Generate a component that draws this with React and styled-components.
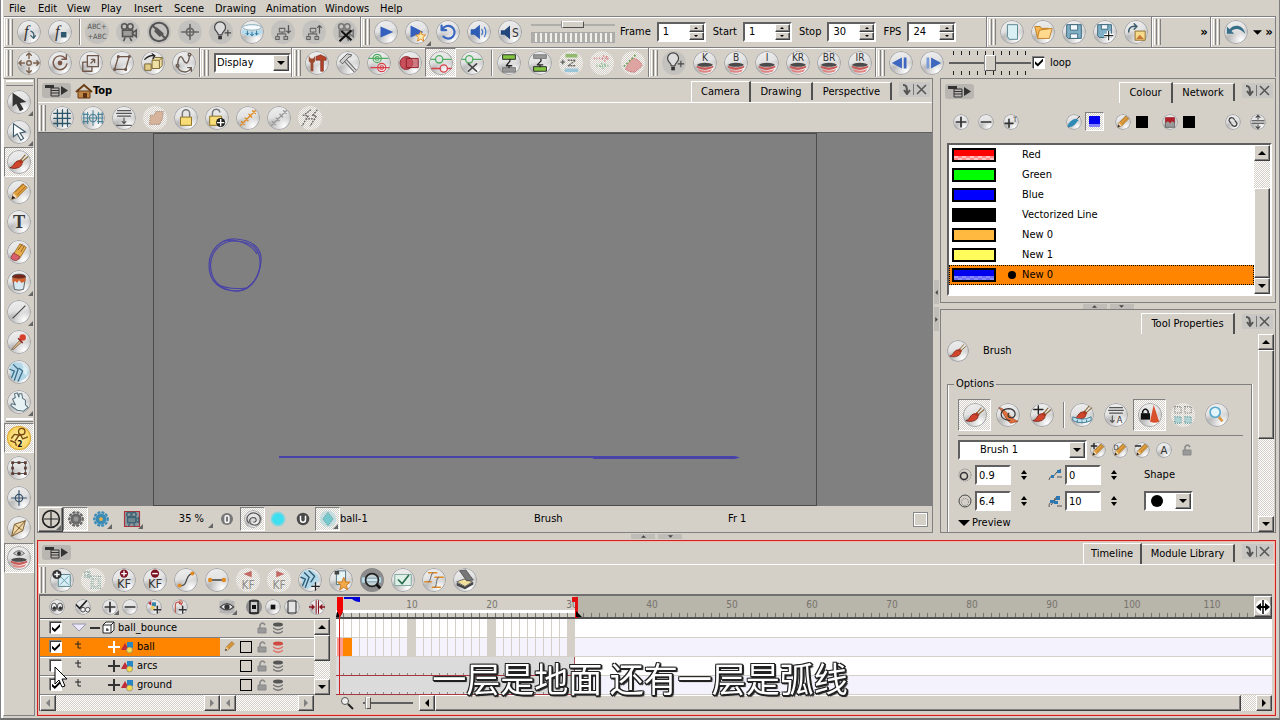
import React from 'react'
import styled, { createGlobalStyle, css } from 'styled-components'

const face = '#d4d0c8'
const shade = '#808080'
const checker = 'repeating-conic-gradient(#ffffff 0 25%, #d4d0c8 0 50%) 0 0 / 2px 2px'

const GlobalStyle = createGlobalStyle`
  * { box-sizing: border-box; }
  body {
    margin: 0;
    overflow: hidden;
    background: ${face};
    color: #000;
    font: 11px/14px "DejaVu Sans Condensed", Tahoma, sans-serif;
  }
  button, input, select { font: inherit; color: inherit; margin: 0; }
  button { padding: 0; border: 0; background: none; }
  ul { margin: 0; padding: 0; list-style: none; }
  svg { display: block; flex: none; }
`

const raised = css`
  background-color: ${face};
  border: 1px solid;
  border-color: #fff #404040 #404040 #fff;
  box-shadow: inset -1px -1px 0 ${shade};
`

const sunken = css`
  background-color: #fff;
  border: 2px solid;
  border-color: #606060 #fff #fff #606060;
`

/* ---------- drawings, all on a 24 unit square ---------- */

const G = ({ c = '#444', w = 1.4, children }) => (
  <g fill="none" stroke={c} strokeWidth={w} strokeLinecap="round" strokeLinejoin="round">{children}</g>
)

const T = ({ x = 12, y = 16, s = 10, c = '#333', w = 400, f = 'DejaVu Sans Condensed', children }) => (
  <text x={x} y={y} fontSize={s} fill={c} fontWeight={w} fontFamily={f} textAnchor="middle">{children}</text>
)

const brushShape = (
  <>
    <path d="M13 11l6-7M15 12l7-6" stroke="#8a6a3a" strokeWidth="1.200" />
    <path d="M2 18c4 0 4-5 8-7 3-1 6 1 5 4-2 4-9 5-13 3z" fill="#d0452c" stroke="#6e1c10" strokeWidth=".8" />
    <path d="M11 11l3-2 3 3-2 2z" fill="#a83a22" />
  </>
)

const cameraShape = (c) => (
  <g fill="none" stroke={c} strokeWidth="1.800">
    <circle cx="8" cy="6" r="3" /><circle cx="14.500" cy="6" r="3" />
    <rect x="6" y="10" width="11" height="7" fill={c} fillOpacity=".35" />
    <path d="M17 13l4-3v7l-4-3M9 18l-2 4M14 18l2 4" />
  </g>
)

const nodesShape = (
  <G c="#666" w={1.2}><path d="M4 17h4v3H4zM13 17h4v3h-4zM8 8h6v4H8zM11 12v2M6 17v-3h9v3" /></G>
)

const onionBase = (
  <>
    <ellipse cx="12" cy="14" rx="8.500" ry="2.200" fill="#4a4a4a" />
    <path d="M3 15q9 4 18 0v2q-9 5-18 0z" fill="#c95a58" />
    <path d="M4 18.500q8 4 16 0l-2 3q-6 2.500-12 0z" fill="#e08682" />
  </>
)

const keyShape = (t) => <>{onionBase}<T y={10} s={11}>{t}</T></>

const bulbShape = (
  <>
    <path d="M9 15c0-3-4-4-4-8a6 6 0 0 1 12 0c0 4-4 5-4 8z" fill="#ddd" stroke="#444" strokeWidth="1.300" />
    <path d="M9 16h4v4H9z" fill="#333" />
    <path d="M16 13h7M19.500 9.500v7" stroke="#444" strokeWidth="1.200" />
  </>
)

const pencilShape = (
  <>
    <path d="M4 20l2-7L16 3l5 4L10 18z" fill="#e5a13c" stroke="#8a5a20" strokeWidth=".8" />
    <path d="M8 12l9-9M10 15l9-9" stroke="#8a5a20" strokeWidth=".8" />
    <path d="M4 20l2-7 4 5z" fill="#f4dcb8" /><path d="M4 20l1-4 3 2.500z" fill="#111" />
  </>
)

const figures = {
  fnArrow: <><T x={9} y={17} s={18} f="Liberation Serif"><tspan fontStyle="italic">f</tspan></T><G c="#3d6070"><path d="M14 11c3 1 4 3 3 7M14 16l3 3 2-3" /></G></>,
  fnBox: <><T x={9} y={17} s={18} f="Liberation Serif"><tspan fontStyle="italic">f</tspan></T><path d="M13 12h6v6h-6z" fill="#2f5870" /></>,
  abc: <><T y={9} s={8} c="#555">ABC+</T><T y={20} s={8} c="#555">+ABC</T></>,
  camera: cameraShape('#555'),
  noLight: <G c="#555" w={2.2}><circle cx="12" cy="12" r="10" /><path d="M5 5l14 14M9 8l7 6M8 11l5 5" /></G>,
  target: <G c="#666" w={1.8}><circle cx="12" cy="12" r="4" /><path d="M12 4v16M3 12h18" /></G>,
  bulb: bulbShape,
  deform: <><ellipse cx="12" cy="7" rx="10" ry="3" fill="#f6fbfd" stroke="#7fa6b8" /><path d="M1 9q11 5 22 0v5q-11 6-22 0z" fill="#b4dcee" /><G c="#246a90" w={1}><path d="M7 11v4M5.500 13.500L7 15l1.500-1.500M12 12v4M10.500 14.500L12 16l1.500-1.500M17 11v4M15.500 13.500l1.500 1.500 1.500-1.500" /></G></>,
  nodesDown: <>{nodesShape}<G c="#555"><path d="M18 5v8M16 11l2 2 2-2" /></G></>,
  nodesUp: <>{nodesShape}<G c="#555"><path d="M18 13V5M16 7l2-2 2 2" /></G></>,
  noCamera: <>{cameraShape('#777')}<path d="M6 22L19 10M8 11l11 10" fill="none" stroke="#111" strokeWidth="2.200" /></>,
  play: <path d="M6 6l14 6-14 6z" fill="#3560bd" />,
  playStar: <><path d="M5 5l14 7-14 6z" fill="#3560bd" /><path d="M16 11l1.500 4 4 .2-3 2.800 1 4-3.500-2.200-3.500 2.200 1-4-3-2.800 4-.2z" fill="#ffe9a8" stroke="#d9801c" /></>,
  loop: <G c="#3a68c0" w={2.4}><path d="M6 9a7 7 0 1 1 1 8M5 5v5h5" /></G>,
  sound: <><path d="M3 9h4l6-5v16l-6-5H3z" fill="#2c5cb4" /><G c="#4a7ac8"><path d="M15 9q2 3 0 6M18 7q3 5 0 10" /></G></>,
  soundS: <><path d="M2 10h4l6-5v15l-6-5H2z" fill="#23467c" /><T x={18} y={17} s={13}>S</T></>,
  page: <path d="M7 4h11v16H9l-2-3z" fill="#d9f0f4" stroke="#52808c" />,
  folder: <><path d="M3 6h6l1 2h8v10H6z" fill="#f5b854" stroke="#c07c20" /><path d="M8 10l14-2-3 11H6z" fill="#ffd98e" stroke="#c07c20" /></>,
  disk: <><path d="M4 4h16v15H6l-2-2z" fill="#7fb0c6" stroke="#38647a" /><path d="M8 4h8v6H8zM8 14h8v5H8z" fill="#f2f8fb" stroke="#38647a" /></>,
  diskPlus: <><path d="M4 4h15v14H6l-2-2z" fill="#7fb0c6" stroke="#38647a" /><path d="M8 4h7v5H8z" fill="#f2f8fb" stroke="#38647a" /><path d="M16 11v10M11 16h10" stroke="#fff" strokeWidth="4" /><path d="M16 11v10M11 16h10" stroke="#222" strokeWidth="1.200" /></>,
  importImg: <><path d="M11 11h11v10H11z" fill="#f6dc8a" stroke="#8c6a2a" /><path d="M12 20l4-5 5 5z" fill="#c8763a" /><G c="#3c5c6c" w={1.6}><path d="M4 12c0-6 5-7 9-6M10 3l3 3-3 3" /></G></>,
  undo: <path d="M2 6v8h8l-3-3c4-4 10-3 15 3-2-10-12-11-17-5z" fill="#376f88" />,
  move: <G c="#7a604c" w={1.5}><circle cx="12" cy="12" r="2.500" /><path d="M12 7V1M9.500 3.500L12 1l2.500 2.500M12 17v6M9.500 20.500L12 23l2.500-2.500M7 12H1M3.500 9.500L1 12l2.500 2.500M17 12h6M20.500 9.500L23 12l-2.500 2.500" /></G>,
  rotate: <G c="#7a5a4c" w={1.6}><path d="M17.500 6.500a7.500 7.500 0 1 0 2 6.500M19 3v5h-5" /><circle cx="12" cy="12" r="1.800" fill="#7a4a34" /></G>,
  scale: <G c="#6e5648" w={1.4}><path d="M8 4h12v12H8zM8 11H3v10h10v-5M12 12l4-4M12.500 8H16v3.500" /></G>,
  skew: <G c="#6e5648" w={1.4}><path d="M8 5h12l-4 14H4z" /><circle cx="8" cy="5" r="1" /><circle cx="20" cy="5" r="1" /><circle cx="16" cy="19" r="1" /><circle cx="4" cy="19" r="1" /></G>,
  cube: <><path d="M11 9l3-3h8v9l-3 3h-8z" fill="#efe0a4" stroke="#77622c" /><path d="M11 9h8v9M19 9l3-3" stroke="#77622c" fill="none" /><path d="M3 13h7v7H3z" fill="#e2cc88" stroke="#77622c" /><G c="#222"><path d="M3 8q5-5 11-4M11 2l3 2-2 3" /></G></>,
  spline: <G c="#6a5c54" w={1.5}><path d="M5 14c1-10 4-11 6-6s6 7 7-4M5 16c2 7 12 8 15 1M16 17h4v4" /><circle cx="5" cy="15" r="1.500" /><circle cx="18" cy="3" r="1.500" /></G>,
  tools: <><path d="M3 4v6l2 2v9h3v-9l2-2V4L8 7H5z" fill="#9c4a30" /><path d="M11 5l5-2 6 3v3h-3v12h-3V9h-5z" fill="#b4432a" stroke="#6c2012" strokeWidth=".6" /></>,
  hammer: <><path d="M9 9l11 12" stroke="#666" strokeWidth="4" /><path d="M9 9l11 12" stroke="#ddd" strokeWidth="2" /><path d="M3 10l8-8 5 1-1 2-2 .5L6 13z" fill="#ccc" stroke="#555" /></>,
  wires: <><G c="#4fae62" w={1.3}><path d="M1 7h21" /><circle cx="10" cy="7" r="4.500" /><circle cx="10" cy="7" r="2" /></G><G c="#d8404a" w={1.3}><path d="M3 17h20" /><circle cx="15" cy="17" r="4.500" /><circle cx="15" cy="17" r="2" /></G></>,
  mask: <g stroke="#8a1c24" fill="#c8505c"><circle cx="8" cy="12" r="7" /><path d="M8 7h13v10H8z" fillOpacity=".7" /></g>,
  wirePair: <><G c="#4fae62" w={1.4}><path d="M1 8h5M14 8h9" /><circle cx="10" cy="8" r="4" /></G><G c="#d8404a" w={1.4}><path d="M2 18h9M19 18h4" /><circle cx="15" cy="18" r="4" /></G></>,
  wireCut: <><G c="#4fae62" w={1.4}><path d="M1 8h4M13 8h9" /><circle cx="9" cy="8" r="4" /></G><G c="#444" w={1.8}><path d="M8 13l9 8M17 13l-9 8" /></G></>,
  hingeA: <><path d="M5 3h14v5H5z" fill="#83c441" stroke="#222" /><path d="M5 17h14v5H5z" fill="#999" stroke="#777" /><G c="#222"><path d="M13 8v2l-4 5h6M12 15v2" /></G></>,
  hingeB: <><path d="M5 3h14v4H5z" fill="#999" stroke="#777" /><path d="M5 16h14v5H5z" fill="#83c441" stroke="#222" /><G c="#222"><path d="M13 8v2l-4 4h6M12 14v2" /></G></>,
  hingeC: <><path d="M6 2h13v4H6z" fill="#83b45a" /><path d="M5 18h15v4H5z" fill="#8cc4dc" /><G c="#444"><path d="M9 9h8l-8 6h9" strokeDasharray="1 2" /><path d="M1 11h4M3 9v4" /></G></>,
  wireDim: <g strokeDasharray="1 2" fill="none" strokeWidth="2"><path d="M3 7h17" stroke="#d8606a" /><path d="M6 15h15" stroke="#70b880" /><circle cx="15" cy="7" r="2.500" stroke="#d8606a" /><circle cx="13" cy="15" r="2.500" stroke="#70b880" /></g>,
  envelope: <><path d="M4 19q4-12 10-12 7 3 8 8l-8 7q-6 0-10-3z" fill="#e09a98" stroke="#c85058" strokeDasharray="2 1" /><path d="M2 16L15 3" stroke="#5a9a40" strokeWidth="2" strokeDasharray="2 2" /></>,
  keyK: keyShape('K'), keyB: keyShape('B'), keyI: keyShape('I'),
  keyKR: keyShape('KR'), keyBR: keyShape('BR'), keyIR: keyShape('IR'),
  prev: <><path d="M13 6v12L2 12z" fill="#3e68c0" /><path d="M15 6h3v12h-3z" fill="#3e68c0" /></>,
  next: <><path d="M11 6v12l11-6z" fill="#3e68c0" /><path d="M6 6h3v12H6z" fill="#7a9ad8" /></>,
  grid: <G c="#2c5468" w={1.4}><path d="M7 3v18M12.500 3v18M18 3v18M3 7h18M3 12.500h18M3 18h18" /></G>,
  fieldGrid: <G c="#4c8498" w={1.2}><path d="M2 6v12M22 6v12M6 6v12M18 6v12M1 12h22M12 4v16M1 8h6M17 8h6M1 16h6M17 16h6" /><circle cx="12" cy="12" r="4" /></G>,
  flatten: <G c="#555" w={1.3}><path d="M5 4h14M4 7h16M5 10h14M4 20h16M12 12v6M10 16l2 2 2-2" /></G>,
  strip: <path d="M7 9h4l2-4h8l-1 8-3 6H6z" fill="#d8ac90" stroke="#8a6a58" strokeDasharray="1 1" />,
  lock: <><path d="M6 11h12v9H6z" fill="#f8dc78" stroke="#8a6c1c" /><path d="M8 11V7a4 4 0 0 1 8 0v4" fill="none" stroke="#777" strokeWidth="1.600" /></>,
  unlock: <><path d="M4 10h13v10H4z" fill="#f8dc78" stroke="#8a6c1c" /><path d="M7 10V7c0-6 8-6 8-1" fill="none" stroke="#777" strokeWidth="1.600" /><circle cx="16" cy="17" r="5" fill="#222" /><path d="M16 13v8M12 17h8" stroke="#fff" strokeWidth="1.500" /></>,
  stitch: <G c="#e08a24" w={1.5}><path d="M4 20L20 4M5 16l3 3M9 12l3 3M13 8l3 3M17 4l3 3" /></G>,
  stitchDim: <G c="#999" w={1.5}><path d="M4 20L20 4M5 16l3 3M9 12l3 3M13 8l3 3M17 4l3 3" /></G>,
  zig: <g fill="none" stroke="#444" strokeWidth="1.400" strokeDasharray="2 1"><path d="M13 3l-8 6 5 1-7 11M20 3l-5 6 4 1-7 11M7 13h10" /></g>,
  arrow: <path d="M5 2v15l4-3 4 8 4-2-4-7 7-1z" fill="#333" />,
  contour: <path d="M6 3v14l4-3 4 7 3-2-4-6 6-1z" fill="#fff" stroke="#3c5868" strokeWidth="1.200" />,
  brush: brushShape,
  pencil: pencilShape,
  text: <T y={19} s={20} c="#3a3a3a" w={700} f="Liberation Serif">T</T>,
  eraser: <><path d="M5 16L13 3l7 4-8 13z" fill="#e8b04a" stroke="#8c5a24" strokeWidth=".8" /><path d="M11 10l5-7M14 12l4-7" stroke="#8c5a24" /><path d="M3 18l3-5 7 4-3 4q-5 1-7-3z" fill="#d8606c" stroke="#8c3038" strokeWidth=".8" /></>,
  bucket: <><path d="M5 6h14l-2 14q-5 2-10 0z" fill="#d8e8f0" stroke="#555" /><ellipse cx="12" cy="6" rx="7" ry="2.500" fill="#7a2418" stroke="#444" /><path d="M5 7v6l3-2 2 2 2-3 3 3 4-2V7q-7 3-14 0z" fill="#d4602c" /></>,
  line: <path d="M5 19L19 5" stroke="#444" strokeWidth="1.200" />,
  dropper: <><path d="M4 20L13 10l2 2-9 8z" fill="#e0bc88" stroke="#6c4c38" strokeWidth=".8" /><circle cx="16" cy="7" r="3.500" fill="#d8402c" /><path d="M11 8l5 5" stroke="#802018" strokeWidth="1.500" /></>,
  morph: <><path d="M2 5l5-4 8 1 6 5 2 6-4 6-7 4-8-4z" fill="#b4d8e8" /><path d="M14 1l8 8-2 7-5-5 2-4z" fill="#dceef6" /><G c="#3c6c88" w={1.4}><path d="M2 9l5 2-3 7M6 4l5 5-4 12M12 8l4 3-5 11" /></G></>,
  hand: <path d="M5 9l3-2-1-4 3-1 2 5V3h3l1 5 3 2v5l3 3-5 4-7-1-7-5 1-2 4 1z" fill="#e6f2f4" stroke="#56707c" strokeWidth="1.100" />,
  runner: <><G c="#7a4a10" w={1.5}><circle cx="15" cy="5" r="3.500" /><path d="M13 9l-6-1-3 4M12 9l-4 6M3 15l5 2 1 3M14 9l2 4 5-2" /></G><T x={13} y={22} s={9} w={700} c="#111">2</T></>,
  bounds: <><G c="#555" w={1.1}><path d="M5 6h14v12H5z" /></G><path d="M3.500 4.500h3v3h-3zM10.500 4.500h3v3h-3zM17.500 4.500h3v3h-3zM3.500 10.500h3v3h-3zM17.500 10.500h3v3h-3zM3.500 16.500h3v3h-3zM10.500 16.500h3v3h-3zM17.500 16.500h3v3h-3z" fill="#5c3c34" /></>,
  pivot: <G c="#35506c" w={1.3}><circle cx="12" cy="12" r="4" /><path d="M12 4v16M4 12h16" /></G>,
  kite: <path d="M4 21l3-13 12-4-3 11zM4 21L19 4M7 8l9 7" fill="#efd7a8" stroke="#77582c" />,
  eyeOnion: <>{onionBase}<path d="M6 7q6-6 12 0-6 5-12 0z" fill="#ccc" stroke="#666" /><circle cx="12" cy="7" r="2" fill="#333" /></>,
  addDrawing: <><path d="M8 6h13v13H8z" fill="#d8eef4" stroke="#52808c" /><path d="M10 8l9 9M19 8l-9 9" stroke="#5c98ac" /><circle cx="6.500" cy="6" r="5" fill="#333" /><path d="M6.500 3v6M3.500 6h6" stroke="#fff" strokeWidth="1.600" /></>,
  dupDrawing: <g fill="none" stroke="#79a8a0" strokeWidth="1.600" strokeDasharray="1 1.500"><path d="M10 8h10v13H10zM3 7h7M7 3v8M3 3h6v6H3z" /><path d="M12 11h6v8h-6z" /></g>,
  kfAdd: <><T y={21} s={14}>KF</T><circle cx="12" cy="5" r="4.500" fill="#7a1220" /><path d="M12 2v6M9 5h6" stroke="#fff" strokeWidth="1.500" /></>,
  kfDel: <><T y={21} s={14}>KF</T><circle cx="12" cy="5" r="4.500" fill="#7a1220" /><path d="M9 5h6" stroke="#fff" strokeWidth="1.500" /></>,
  motion: <><G c="#444"><path d="M5 18c10 2 5-12 14-13" /></G><circle cx="5" cy="18" r="2.200" fill="#e08a24" /><circle cx="19" cy="5" r="2.200" fill="#e08a24" /></>,
  stop: <><G c="#444"><path d="M5 12h14" /></G><circle cx="4.500" cy="12" r="2.400" fill="#e08a24" /><circle cx="19.500" cy="12" r="2.400" fill="#e08a24" /></>,
  kfPrev: <><g opacity=".6"><T y={22} s={13}>KF</T></g><path d="M16 2v7L7 5.500z" fill="#c0504c" /></>,
  kfNext: <><g opacity=".6"><T y={22} s={13}>KF</T></g><path d="M9 2v7l9-3.500z" fill="#c0504c" /></>,
  morphAdd: <><path d="M2 5l5-4 8 1 6 5 1 6-8 6-6 3-4-4z" fill="#b4d8e8" /><G c="#2c5c78" w={1.5}><path d="M2 9l5 2-3 7M6 4l5 5-4 11M11 2l6 6-4 6" /></G><G c="#222" w={1.4}><path d="M14 19h8M18 15v8" /></G></>,
  starDoc: <><path d="M8 2h9v15H7V5z" fill="#e6f4f6" stroke="#4c6c78" /><path d="M5 2h5v4H5z" fill="#444" /><path d="M15 9l2 5 5 .3-4 3.500 1.300 5-4.300-2.800-4.500 2.800 1.500-5-4-3.500 5-.3z" fill="#f0a848" stroke="#c8761c" /></>,
  search: <><path d="M1 9h21v6H1z" fill="#bfe0ec" stroke="#8ab" strokeWidth=".6" /><circle cx="12" cy="12" r="7" fill="#dcecf2" fillOpacity=".7" stroke="#222" strokeWidth="2" /><path d="M17 17l4 4" stroke="#111" strokeWidth="3" /><path d="M6 10h12M6 14h12" stroke="#789" /></>,
  check: <><path d="M3 6h18v12H3z" fill="#dff0e8" stroke="#7ca49c" /><G c="#2a6c4c" w={1.8}><path d="M7 12l4 4 7-9" /></G></>,
  curves: <><G c="#e08a24" w={1.7}><path d="M6 4h9M2 14h7M13 9h9M10 20h9" /></G><G c="#777" w={1.2}><path d="M11 4c-4 3-1 7-5 10M17 9c-4 3-1 8-4 11" /></G></>,
  scanner: <><path d="M3 15l9 4 9-5v3l-9 5-9-4z" fill="#444" /><path d="M3 14l8-3 9 3-8 5z" fill="#f3df9c" stroke="#666" /><path d="M6 2l7-1 8 11-7 1z" fill="#777" stroke="#444" strokeWidth=".8" /></>,
  plus: <G c="#333" w={2.6}><path d="M12 5v14M5 12h14" /></G>,
  minus: <G c="#333" w={2.6}><path d="M5 12h14" /></G>,
  plusT: <><G c="#333" w={2.4}><path d="M9 8v12M3 14h12" /></G><T x={18} y={12} s={11}>T</T></>,
  quill: <><path d="M3 20L21 3" stroke="#444" strokeWidth="1.500" /><path d="M2 19q3-10 12-12l5 2-6 7q-5 5-11 3z" fill="#2f8ab4" /></>,
  bucketRed: <><path d="M5 6h14v14H5z" fill="#999" stroke="#444" /><path d="M5 5h14v8l-4-2-3 3-3-3-4 2z" fill="#b02028" /></>,
  link: <G c="#444" w={2}><path d="M9 14l-3-4c0-5 5-6 8-2M15 10l3 4c0 5-5 6-8 2" /></G>,
  split: <G c="#444" w={1.6}><path d="M3 10h18M3 14h18M12 8V2M9 5l3-3 3 3M12 16v6M9 19l3 3 3-3" /></G>,
  brushOutline: <><path d="M2 4c7 0 10 10 21 15l-8 2C9 17 8 10 2 4z" fill="#e0703c" stroke="#8c3c1c" strokeWidth=".7" /><G c="#333" w={1.3}><path d="M14 18c-13-1-12-13-1-13 9 1 8 10 3 10-4 0-5-3-3-5" /></G></>,
  brushPlus: <>{brushShape}<G c="#222" w={1.5}><path d="M8 2v9M3 6h10" /></G></>,
  brushRuler: <><g transform="translate(1 -2)">{brushShape}</g><path d="M2 14q10 5 20 0v4q-10 5-20 0z" fill="#c4e4f0" stroke="#3c7890" /><path d="M7 17v3M12 18v3M17 17v3" stroke="#3c7890" /></>,
  flattenA: <><G c="#555" w={1.2}><path d="M5 4h14M4 7h16M5 10h14M8 13v7M6 18l2 2 2-2" /></G><T x={16} y={21} s={10}>A</T></>,
  lockPaint: <><path d="M2 10h10v7H2z" fill="#111" /><path d="M4 10V8q3-5 6 0v2" fill="none" stroke="#111" strokeWidth="1.600" /><path d="M16 1l6 18q-5 3-10 0z" fill="#d8502c" /></>,
  cells: <g fill="none" strokeWidth="1.400" strokeDasharray="1 1.500"><path d="M3 3h7v7H3zM14 3h7v7h-7z" stroke="#666" /><path d="M3 14h7v7H3zM14 14h7v7h-7z" stroke="#4c9098" fill="#a8d4d8" /></g>,
  lens: <><circle cx="10" cy="9" r="5.500" fill="#e4f4fb" stroke="#56a8cc" strokeWidth="1.800" /><path d="M14 14l4 5" stroke="#d99a4a" strokeWidth="3" /></>,
  penAdd: <>{pencilShape}<G c="#222" w={2}><path d="M6 2v8M2 6h8" /></G></>,
  penD: <>{pencilShape}<T x={6} y={12} s={11}>D</T></>,
  penDel: <>{pencilShape}<G c="#222" w={2}><path d="M2 6h8" /></G></>,
  letterA: <T y={18} s={17}>A</T>,
  eyes: <g fill="#eee" stroke="#444" strokeWidth="1.400"><ellipse cx="7.500" cy="12" rx="4" ry="6" /><ellipse cx="16.500" cy="12" rx="4" ry="6" /><circle cx="8" cy="14" r="2.200" fill="#222" /><circle cx="17" cy="14" r="2.200" fill="#222" /></g>,
  eyesCheck: <><g fill="#eee" stroke="#444" strokeWidth="1.400"><circle cx="12" cy="16" r="3.500" /><circle cx="19" cy="16" r="3.500" /></g><G c="#222" w={2.6}><path d="M2 9l5 5L17 3" /></G></>,
  layersAdd: <><path d="M3 6l5-3v7z" fill="#b03040" /><path d="M9 5h6v6H9z" fill="#3484a8" /><circle cx="10" cy="13" r="3" fill="#f0d060" /><G c="#333" w={2.2}><path d="M17 11v10M12 16h10" /></G></>,
  pegAdd: <><G c="#c05040" w={1.6}><path d="M5 20V9c0-6 9-6 9 0" /><circle cx="13" cy="5" r="2.500" /></G><G c="#333" w={2.2}><path d="M16 11v10M11 16h10" /></G></>,
  eye: <><path d="M1 3h22v18H1z" fill="#b4b4b4" /><path d="M2 12q10-10 20 0-10 9-20 0z" fill="#eee" stroke="#444" strokeWidth="1.600" /><circle cx="12" cy="12" r="4" fill="#333" /></>,
  cellDot: <><path d="M6 3h12v18H6z" fill="#ccc" stroke="#111" strokeWidth="2" /><path d="M9 9h6v6H9z" fill="#111" /></>,
  dot: <path d="M8.500 8.500h7v7h-7z" fill="#111" />,
  cell: <path d="M6 3h12v18H6z" fill="#e4e4e4" stroke="#222" strokeWidth="1.500" />,
  fold: <g fill="#8a1420"><path d="M10 2h1.500v20H10zM13.500 2H15v20h-1.500z" /><path d="M0 11h4V7l5 5-5 5v-4H0zM24 11h-4V7l-5 5 5 5v-4h4z" /></g>,
  gear: <G c="#666" w={3}><circle cx="12" cy="12" r="6" fill="#777" /><circle cx="12" cy="12" r="9" strokeDasharray="1.500 4" /><circle cx="12" cy="12" r="1.500" stroke="#999" /></G>,
  gearBlue: <><G c="#3a8cb8" w={3}><circle cx="12" cy="12" r="6" fill="#3a8cb8" /><circle cx="12" cy="12" r="9" strokeDasharray="1.500 4" /></G><circle cx="12" cy="12" r="2.500" fill="#f0b040" /></>,
  crosshair: <G c="#222" w={2}><circle cx="12" cy="12" r="10" /><path d="M12 4v16M4 12h16" strokeWidth="1.400" /></G>,
  cameraRed: <><path d="M2 2h20v20H2z" fill="#8c989c" stroke="#b03038" strokeWidth="1.500" />{cameraShape('#3c6474')}</>,
  zero: <><circle cx="12" cy="12" r="8" fill="#777" /><rect x="9.500" y="7.500" width="5" height="9" rx="2" fill="none" stroke="#fff" strokeWidth="2" /></>,
  swirl: <G c="#555" w={1.6}><path d="M6 17c-6-8 3-16 11-12s5 16-4 15c-7-1-7-9-1-10 5 0 6 6 1 6" /></G>,
  cyan: <circle cx="12" cy="12" r="8" fill="#3ce0f0" stroke="#8cd4dc" strokeWidth="2" />,
  U: <><circle cx="12" cy="12" r="7.500" fill="#4a4a4a" /><path d="M9 8v5q0 3 3 3t3-3V8" fill="none" stroke="#fff" strokeWidth="1.800" /></>,
  diamond: <><circle cx="12" cy="12" r="11" fill="#c4dedf" /><path d="M12 3l7 9-7 9-7-9z" fill="#74c8ce" stroke="#6c9494" strokeDasharray="2 1" /></>,
}

const Fig = ({ name, size = 24 }) => (
  <svg width={size} height={size} viewBox="0 0 24 24" aria-hidden="true">{figures[name]}</svg>
)

const Tri = ({ dir = 'down', size = 8, color = '#000' }) => {
  const turn = { down: 0, left: 90, up: 180, right: 270 }[dir]
  return (
    <svg width={size} height={size} viewBox="0 0 8 8" aria-hidden="true">
      <path d="M0 2h8L4 6z" fill={color} transform={`rotate(${turn} 4 4)`} />
    </svg>
  )
}

/* ---------- common controls ---------- */

const Orb = styled.span`
  display: flex;
  align-items: center;
  justify-content: center;
  width: ${(p) => p.$size}px;
  height: ${(p) => p.$size}px;
  border-radius: 50%;
  ${(p) => p.$kind === 'ball' && css`
    background:
      radial-gradient(ellipse at 72% 84%, #ffffff 0, rgba(255, 255, 255, 0) 50%),
      linear-gradient(165deg, #f2f2f2 0, #e2e2e2 42%, #bcbcbc 58%, #cacaca 100%);
    box-shadow: inset 0 0 0 1px #a8a8a8;
  `}
  ${(p) => p.$kind === 'flat' && css`background: #c4c2be;`}
  ${(p) => p.$kind === 'dim' && css`background: ${checker}; opacity: 0.8;`}
  ${(p) => p.$kind === 'dark' && css`background: #8c8c8c;`}
  ${(p) => p.$kind === 'gold' && css`background: radial-gradient(circle, #fff3b0, #f6cc4c 80%); box-shadow: inset 0 0 0 1px #dca838;`}
`

const IconButton = styled.button`
  position: relative;
  display: flex;
  flex: none;
  align-items: center;
  justify-content: center;
  width: ${(p) => p.$w}px;
  height: ${(p) => p.$h}px;
  ${(p) => p.$on && css`
    background: ${checker};
    border: 1px solid;
    border-color: ${shade} #fff #fff ${shade};
  `}
  ${(p) => p.$up && raised}
`

const Corner = styled.i`
  position: absolute;
  right: 1px;
  bottom: 1px;
  border-left: 5px solid transparent;
  border-bottom: 5px solid #666;
`

const Tool = ({ icon, kind = 'ball', on, up, more, w = 31, h = 29, size = 24 }) => (
  <IconButton type="button" aria-label={icon} aria-pressed={on ? true : undefined} $on={on} $up={up} $w={w} $h={h}>
    <Orb $kind={kind} $size={size}><Fig name={icon} size={size > 20 ? size - 2 : size} /></Orb>
    {more && <Corner />}
  </IconButton>
)

const Tools = ({ list, ...rest }) => list.map((item, i) => {
  if (item === '|') return <Divider key={i} />
  const [icon, kind] = item.split(':')
  return <Tool key={i} icon={icon} kind={kind} {...rest} />
})

const Divider = styled.span`
  flex: none;
  width: 2px;
  height: 26px;
  margin: 0 0 0 4px;
  border-left: 1px solid ${shade};
  border-right: 1px solid #fff;
`

const Grip = styled.span`
  flex: none;
  width: 7px;
  height: 26px;
  margin-left: 1px;
  background: linear-gradient(90deg, #fff 0 1px, ${face} 1px 2px, ${shade} 2px 3px, ${face} 3px 4px, #fff 4px 5px, ${face} 5px 6px, ${shade} 6px 7px);
`

const Bar = styled.div`
  display: flex;
  align-items: center;
  flex: ${(p) => (p.$grow ? '1 0 auto' : 'none')};
  border-left: 1px solid #fff;
  border-right: 1px solid ${shade};
`

const BarRow = styled.div`
  display: flex;
  flex: none;
  height: ${(p) => p.$h}px;
  margin: 0 3px;
  border-top: 1px solid ${shade};
  box-shadow: inset 0 1px 0 #fff;
`

const MenuBar = styled.nav`
  display: flex;
  flex: none;
  height: 16px;
  padding: 1px 0 0 3px;
`

const MenuItem = styled.button`
  width: ${(p) => p.$w}px;
  padding-left: 5px;
  text-align: left;
  white-space: nowrap;
`

const NumberLabel = styled.label`
  display: flex;
  align-items: center;
  gap: 6px;
  margin-right: 7px;
`

const NumberBox = styled.span`
  ${sunken}
  display: flex;
  width: 49px;
  height: 20px;
`

const NumberInput = styled.input`
  flex: 1;
  min-width: 0;
  padding: 0 0 0 4px;
  border: 0;
  outline: 0;
  background: transparent;
`

const SpinKeys = styled.span`
  display: flex;
  flex-direction: column;
  width: 15px;
`

const SpinKey = styled.button`
  ${raised}
  display: flex;
  flex: 1;
  align-items: center;
  justify-content: center;
`

const NumberField = ({ label, value }) => (
  <NumberLabel>
    {label}
    <NumberBox>
      <NumberInput defaultValue={value} />
      <SpinKeys>
        <SpinKey type="button" aria-label="up"><Tri dir="up" size={4} /></SpinKey>
        <SpinKey type="button" aria-label="down"><Tri size={4} /></SpinKey>
      </SpinKeys>
    </NumberBox>
  </NumberLabel>
)

const SelectWrap = styled.span`
  ${sunken}
  position: relative;
  display: flex;
  flex: none;
  width: ${(p) => p.$w}px;
  height: 20px;
`

const SelectInput = styled.select`
  flex: 1;
  appearance: none;
  padding: 0 0 0 ${(p) => p.$pad || 1}px;
  border: 0;
  outline: 0;
  background: transparent;
`

const SelectKey = styled.span`
  ${raised}
  position: absolute;
  top: 0;
  right: 0;
  bottom: 0;
  display: flex;
  align-items: center;
  justify-content: center;
  width: 16px;
  pointer-events: none;
`

const Picker = ({ label, options, w, pad, children }) => (
  <SelectWrap $w={w}>
    {children}
    <SelectInput aria-label={label} $pad={pad}>{options.map((o) => <option key={o}>{o}</option>)}</SelectInput>
    <SelectKey><Tri /></SelectKey>
  </SelectWrap>
)

const Check = styled.input.attrs({ type: 'checkbox' })`
  appearance: none;
  flex: none;
  width: 12px;
  height: 12px;
  background: #fff;
  border: 1px solid;
  border-color: #404040 #fff #fff #404040;
  box-shadow: -1px -1px 0 ${shade};
  &:checked::before {
    content: '';
    display: block;
    width: 8px;
    height: 8px;
    margin: 1px;
    background: #000;
    clip-path: polygon(0 35%, 35% 65%, 100% 0, 100% 35%, 35% 100%, 0 70%);
  }
`

const Slider = styled.input.attrs({ type: 'range' })`
  appearance: none;
  display: block;
  width: 100%;
  height: ${(p) => p.$th}px;
  background: linear-gradient(${(p) => p.$line}, ${(p) => p.$line}) center / 100% 2px no-repeat;
  &::-webkit-slider-thumb {
    appearance: none;
    width: ${(p) => p.$tw}px;
    height: ${(p) => p.$th}px;
    background: ${face};
    border: 1px solid;
    border-color: #fff #505050 #505050 #fff;
    box-shadow: -1px 0 0 #909090;
  }
`

const JogBox = styled.div`
  width: 84px;
  margin: 0 5px 0 6px;
`

const JogWheel = styled.div`
  height: 11px;
  margin-top: 4px;
  border: 1px solid #aaa;
  background: repeating-linear-gradient(90deg, #b0aea8 0 3px, #f2f0ec 3px 5px);
`

const TickSlider = styled.div`
  width: 82px;
  margin: 0 2px;
`

const TickMarks = styled.div`
  height: 4px;
  margin: 0 4px;
  background: repeating-linear-gradient(90deg, #222 0 1px, transparent 1px 8px);
`

const LoopLabel = styled.label`
  display: flex;
  align-items: center;
  gap: 5px;
`

const Spacer = styled.span`
  flex: 1;
`

const More = styled.button`
  width: 12px;
  font: bold 13px/16px "DejaVu Sans Condensed", sans-serif;
`

const ArrowButton = styled.button`
  display: flex;
  flex: none;
  justify-content: center;
  width: 12px;
`

/* ---------- scroll bars ---------- */

const ScrollTrack = styled.div`
  display: flex;
  flex: ${(p) => (p.$grow ? 1 : 'none')};
  flex-direction: ${(p) => (p.$side ? 'row' : 'column')};
  width: ${(p) => (p.$side ? p.$len : '16px')};
  height: ${(p) => (p.$side ? '16px' : 'auto')};
  min-width: 0;
  background: ${checker};
`

const ScrollKey = styled.button`
  ${raised}
  display: flex;
  flex: none;
  align-items: center;
  justify-content: center;
  width: 16px;
  height: 16px;
`

const ScrollThumb = styled.div`
  ${raised}
  flex: ${(p) => p.$size} 1 0;
`

const ScrollGap = styled.div`
  flex: ${(p) => p.$size} 1 0;
`

const Scroll = ({ side, before = 0, thumb, after = 0, len, grow, off }) => (
  <ScrollTrack $side={side} $len={len} $grow={grow}>
    <ScrollKey type="button" aria-label="back"><Tri dir={side ? 'left' : 'up'} color={off ? '#808080' : '#000'} /></ScrollKey>
    <ScrollGap $size={before} />
    {thumb && <ScrollThumb $size={thumb} />}
    <ScrollGap $size={after} />
    <ScrollKey type="button" aria-label="forward"><Tri dir={side ? 'right' : 'down'} color={off ? '#808080' : '#000'} /></ScrollKey>
  </ScrollTrack>
)

/* ---------- panels ---------- */

const Window = styled.div`
  display: flex;
  flex-direction: column;
  height: 100vh;
  min-height: 600px;
  border-left: 1px solid ${shade};
  border-right: 1px solid ${shade};
  border-bottom: 2px solid #707070;
  box-shadow: inset 2px 0 0 #fff;
`

const Workspace = styled.div`
  display: flex;
  flex: 1;
  min-height: 0;
  padding: 1px 3px 2px 2px;
`

const ToolBox = styled.div`
  display: flex;
  flex: none;
  flex-direction: column;
  align-items: center;
  width: 32px;
  border: 1px solid;
  border-color: ${shade} ${shade} ${shade} #fff;
`

const ToolGrip = styled.span`
  flex: none;
  width: 27px;
  height: ${(p) => p.$h || 6}px;
  margin: 1px 0;
  border-top: 2px solid #fff;
  border-bottom: 1px solid ${shade};
`

const Stage = styled.div`
  display: flex;
  flex: 1;
  flex-direction: column;
  min-width: 0;
  margin-left: 2px;
`

const Upper = styled.div`
  display: flex;
  flex: 1;
  min-height: 0;
`

const Panel = styled.section`
  display: flex;
  flex: ${(p) => p.$flex || 'none'};
  flex-direction: column;
  min-width: 0;
  min-height: 0;
  border: 1px solid ${(p) => (p.$red ? '#d02020' : shade)};
  ${(p) => p.$red && css`box-shadow: inset 0 0 0 1px #f2b8ae;`}
`

const Head = styled.header`
  display: flex;
  flex: none;
  align-items: flex-end;
  height: 24px;
  padding: 0 2px 0 4px;
  border-bottom: ${(p) => (p.$line ? '1px solid #fff' : 0)};
`

const MenuChip = styled.button`
  display: flex;
  align-items: center;
  width: 29px;
  height: 15px;
  align-self: center;
  justify-content: center;
  background: #b9b6b1;
  border-radius: 3px;
`

const Crumb = styled.a`
  display: flex;
  align-items: center;
  align-self: center;
  margin-left: 4px;
  color: #000;
  font-weight: 700;
  text-decoration: none;
`

const Tab = styled.button`
  flex: none;
  width: ${(p) => p.$w}px;
  height: ${(p) => (p.$on ? 21 : 18)}px;
  margin-bottom: ${(p) => (p.$on ? 0 : 2)}px;
  white-space: nowrap;
  border: 0 solid;
  border-width: 1px 2px 0 ${(p) => (p.$on ? 1 : 0)}px;
  border-color: #fff #505050 #fff #fff;
`

const DockKeys = styled.span`
  display: flex;
  align-items: center;
  justify-content: center;
  width: 31px;
  height: 15px;
  margin: 0 0 5px 7px;
  background: #c9c7c3;
`

const DockKey = styled.button`
  display: flex;
  padding: 0 2px;
  & + & { border-left: 1px solid #777; }
`

const PanelHead = ({ tabs, line, menu, children }) => (
  <Head $line={line}>
    {menu && (
      <MenuChip type="button" aria-label="View menu">
        <svg width="25" height="13" viewBox="0 0 25 13"><path d="M1 1h9v3H1z" fill="#333" /><path d="M7 4h8v8H7zM7 6.500h8M7 9h8" fill="none" stroke="#333" /><path d="M17 2l7 4.500-7 4.500z" fill="#333" /></svg>
      </MenuChip>
    )}
    {children}
    <Spacer />
    {tabs.map(([name, w], i) => <Tab key={name} type="button" $w={w} $on={i === 0}>{name}</Tab>)}
    <DockKeys>
      <DockKey type="button" aria-label="Add view"><svg width="9" height="11" viewBox="0 0 9 11"><path d="M1 1c4 0 4 3 4 8M2 6l3 4 3-4" fill="none" stroke="#555" strokeWidth="2" /></svg></DockKey>
      <DockKey type="button" aria-label="Close view"><svg width="11" height="11" viewBox="0 0 11 11"><path d="M1 1l9 9M10 1l-9 9" stroke="#555" strokeWidth="1.500" /></svg></DockKey>
    </DockKeys>
  </Head>
)

const ToolRow = styled.div`
  display: flex;
  flex: none;
  align-items: center;
  height: 29px;
`

const Canvas = styled.div`
  flex: 1;
  min-height: 0;
  padding: 0 115px;
  background: #808080;
  border-top: 1px solid #606060;
`

const Paper = styled.div`
  height: 100%;
  border: 1px solid #4c4c4c;
  svg { width: 100%; height: 100%; }
`

const Status = styled.footer`
  display: flex;
  flex: none;
  align-items: center;
  height: 26px;
`

const StatusText = styled.span`
  flex: ${(p) => p.$flex || 'none'};
  width: ${(p) => p.$w || 'auto'};
  text-align: ${(p) => p.$align || 'left'};
`

const StatusSwatch = styled.span`
  width: 15px;
  height: 15px;
  margin-right: 4px;
  border: 1px solid #888;
  box-shadow: inset 0 0 0 1px #fff;
`

const SplitBar = styled.div`
  display: flex;
  flex: none;
  flex-direction: ${(p) => (p.$tall ? 'column' : 'row')};
  align-items: center;
  justify-content: center;
  gap: 3px;
  width: ${(p) => (p.$tall ? '7px' : 'auto')};
  height: ${(p) => (p.$tall ? 'auto' : `${p.$h}px`)};
`

const SplitKey = styled.button`
  display: flex;
  align-items: center;
  justify-content: center;
  width: ${(p) => (p.$tall ? 5 : 24)}px;
  height: ${(p) => (p.$tall ? 24 : 5)}px;
  background: #c0bdb8;
`

const Splitter = ({ tall, h }) => (
  <SplitBar $tall={tall} $h={h}>
    <SplitKey type="button" aria-label="Shrink" $tall={tall}><Tri dir={tall ? 'left' : 'up'} size={5} color="#444" /></SplitKey>
    <SplitKey type="button" aria-label="Expand" $tall={tall}><Tri dir={tall ? 'right' : 'down'} size={5} color="#444" /></SplitKey>
  </SplitBar>
)

const Gap = styled.span`
  flex: none;
  width: ${(p) => p.$w}px;
`

/* ---------- colour view ---------- */

const SideColumn = styled.div`
  display: flex;
  flex: none;
  flex-direction: column;
  width: 336px;
`

const ColourBar = styled.div`
  display: flex;
  flex: none;
  align-items: center;
  height: 40px;
  padding: 0 5px 3px 7px;
`

const Ink = styled.button`
  width: ${(p) => (p.$on ? 19 : 12)}px;
  height: ${(p) => (p.$on ? 19 : 12)}px;
  margin-right: ${(p) => (p.$on ? 5 : 8)}px;
  background: ${(p) => (p.$on ? checker : '#000')};
  ${(p) => p.$on && css`
    padding: 3px;
    border: 1px solid;
    border-color: ${shade} #fff #fff ${shade};
    &::before {
      content: '';
      display: block;
      height: 11px;
      background: linear-gradient(#0000ee 8px, #8080ff 8px);
    }
  `}
`

const ColourList = styled.div`
  ${sunken}
  display: flex;
  flex: 1;
  min-height: 0;
  margin: 0 3px 6px 6px;
`

const Colours = styled.ul`
  flex: 1;
  overflow: hidden;
`

const ColourRow = styled.li`
  display: flex;
  align-items: center;
  height: 20px;
  padding-left: 3px;
  ${(p) => p.$on && css`
    background: #ff8400;
    outline: 1px dotted #000;
    outline-offset: -1px;
  `}
`

const Swatch = styled.span`
  width: 44px;
  height: 14px;
  border: 2px solid #000;
  background: ${(p) => p.$c};
  ${(p) => p.$soft && css`
    background:
      linear-gradient(${p.$c}, ${p.$c}) 0 0 / 100% 6px no-repeat,
      repeating-conic-gradient(${p.$soft[0]} 0 25%, ${p.$soft[1]} 0 50%) 0 0 / 8px 4px;
  `}
`

const Bullet = styled.span`
  width: 8px;
  height: 8px;
  margin: 0 6px 0 12px;
  border-radius: 50%;
  background: ${(p) => (p.$on ? '#000' : 'transparent')};
`

const colours = [
  { name: 'Red', c: '#ff0000', soft: ['#ffc0c0', '#ff8c8c'] },
  { name: 'Green', c: '#00ff00' },
  { name: 'Blue', c: '#0000ff' },
  { name: 'Vectorized Line', c: '#000000' },
  { name: 'New 0', c: '#ffb940' },
  { name: 'New 1', c: '#fffc5c' },
  { name: 'New 0', c: '#0000ee', soft: ['#8c8cf8', '#6c6cf4'], on: true },
]

const ColourView = () => (
  <Panel $flex="224 1 0">
    <PanelHead menu tabs={[['Colour', 54], ['Network', 62]]} />
    <ColourBar>
      <Tools list={['plus', 'minus', 'plusT']} w={25} h={20} size={16} />
      <Spacer />
      <Tool icon="quill" w={22} h={20} size={16} />
      <Ink type="button" aria-label="Brush colour" $on />
      <Tool icon="pencil" w={27} h={20} size={16} />
      <Ink type="button" aria-label="Pencil colour" />
      <Tool icon="bucketRed" w={27} h={20} size={16} />
      <Ink type="button" aria-label="Paint colour" />
      <Gap $w={17} />
      <Tools list={['link', 'split']} w={25} h={20} size={16} />
    </ColourBar>
    <ColourList>
      <Colours>
        {colours.map((item, i) => (
          <ColourRow key={i} $on={item.on}>
            <Swatch $c={item.c} $soft={item.soft} />
            <Bullet $on={item.on} />
            {item.name}
          </ColourRow>
        ))}
      </Colours>
      <Scroll before={27} thumb={90} />
    </ColourList>
  </Panel>
)

/* ---------- tool properties ---------- */

const PropsBody = styled.div`
  display: flex;
  flex: 1;
  min-height: 0;
  padding-right: 1px;
`

const PropsMain = styled.div`
  flex: 1;
  padding: 0 6px;
  overflow: hidden;
`

const ToolTitle = styled.div`
  display: flex;
  align-items: center;
  gap: 14px;
  height: 34px;
`

const Options = styled.fieldset`
  margin: 9px 0 0;
  padding: 7px 8px 30px 10px;
  border: 1px solid ${shade};
  box-shadow: inset 1px 0 0 #fff, 1px 0 0 #fff;
  legend { padding: 0 2px; margin-left: -4px; }
`

const OptionTools = styled.div`
  display: flex;
  align-items: center;
  height: 38px;
  padding-bottom: 4px;
  margin-bottom: 4px;
  border-bottom: 1px solid ${shade};
`

const PresetRow = styled.div`
  display: flex;
  align-items: center;
  margin-bottom: 2px;
`

const SizeGrid = styled.div`
  display: grid;
  grid-template-columns: 90px 96px auto;
  grid-auto-rows: 26px;
  align-items: center;
`

const SizeField = styled.label`
  display: flex;
  align-items: center;
`

const SizeInput = styled.input`
  ${sunken}
  width: 36px;
  height: 20px;
  margin: 0 9px 0 2px;
  padding: 0 2px;
`

const Preview = styled.button`
  display: flex;
  align-items: center;
  gap: 2px;
  height: 18px;
`

const ShapeDot = styled.span`
  position: absolute;
  top: 2px;
  left: 5px;
  width: 12px;
  height: 12px;
  border-radius: 50%;
  background: #000;
`

const Stepper = () => (
  <svg width="8" height="10" viewBox="0 0 8 10"><path d="M4 0l3 4H1zM4 10L1 6h6z" /></svg>
)

const LockGlyph = () => (
  <svg width="10" height="12" viewBox="0 0 10 12"><path d="M1 6h8v5H1z" fill="#999" stroke="#888" /><path d="M3 6V3q2.500-4 5 0" fill="none" stroke="#888" strokeWidth="1.500" /></svg>
)

const sizeIcons = {
  max: <><circle cx="7" cy="7" r="6" fill="none" stroke="#777" strokeDasharray="1 1" /><circle cx="6" cy="8" r="3.500" fill="none" stroke="#333" strokeWidth="1.500" /></>,
  min: <><circle cx="7" cy="7" r="6" fill="none" stroke="#444" /><circle cx="7" cy="8" r="3.500" fill="none" stroke="#777" strokeDasharray="1 1" /></>,
  smooth: <><path d="M1 12c2-7 5-2 7-7l5-4M9 9h5" fill="none" stroke="#555" /><path d="M3 7h3v3H3zM9 2h4v3H9z" fill="#2c78b4" /></>,
  contour: <><path d="M1 13c0-8 5-2 6-9h5M3 11l5-6M9 12h5" fill="none" stroke="#555" /><path d="M2 6h4v3H2zM8 2h4v4H8zM6 7h4v3H6z" fill="#2c78b4" /></>,
}

const Size = ({ icon, label, value }) => (
  <SizeField>
    <svg width="15" height="15" viewBox="0 0 15 15">{sizeIcons[icon]}</svg>
    <SizeInput aria-label={label} defaultValue={value} />
    <Stepper />
  </SizeField>
)

const PropertiesView = () => (
  <Panel $flex="223 1 0">
    <PanelHead tabs={[['Tool Properties', 94]]} />
    <PropsBody>
      <PropsMain>
        <ToolTitle><Orb $kind="ball" $size={22}><Fig name="brush" size={20} /></Orb>Brush</ToolTitle>
        <Options>
          <legend>Options</legend>
          <OptionTools>
            <Tool icon="brush" on w={33} h={32} />
            <Tools list={['brushOutline', 'brushPlus']} w={34} />
            <Divider />
            <Tools list={['brushRuler', 'flattenA']} w={34} />
            <Tool icon="lockPaint" on w={33} h={32} />
            <Tools list={['cells:dim', 'lens']} w={34} />
          </OptionTools>
          <PresetRow>
            <Picker label="Brush preset" options={['Brush 1']} w={129} pad={20} />
            <Tools list={['penAdd', 'penD', 'penDel', 'letterA']} w={22} h={20} size={16} />
            <Gap $w={7} />
            <LockGlyph />
          </PresetRow>
          <SizeGrid>
            <Size icon="max" label="Minimum size" value="0.9" />
            <Size icon="smooth" label="Smoothness" value="0" />
            <span>Shape</span>
            <Size icon="min" label="Maximum size" value="6.4" />
            <Size icon="contour" label="Contour" value="10" />
            <Picker label="Shape" options={['']} w={49}><ShapeDot /></Picker>
          </SizeGrid>
          <Preview type="button"><Tri size={12} />Preview</Preview>
        </Options>
      </PropsMain>
      <Scroll thumb={86} after={76} />
    </PropsBody>
  </Panel>
)

/* ---------- timeline ---------- */

const TimeBody = styled.div`
  display: flex;
  margin: 0 3px 4px 1px;
  border-top: 2px solid #707070;
`

const LayerSide = styled.div`
  flex: none;
  width: 291px;
  border-left: 1px solid #606060;
`

const LayerHead = styled.div`
  display: flex;
  align-items: center;
  height: 23px;
  padding-left: 4px;
  border-bottom: 1px solid #505050;
`

const LayerScroller = styled.div`
  display: flex;
`

const LayerRow = styled.div`
  display: grid;
  grid-template-columns: 180px 94px;
  height: 19px;
  border-bottom: 1px solid ${shade};
  box-shadow: inset 0 1px 0 #fff;
`

const LayerName = styled.label`
  display: flex;
  align-items: center;
  padding-left: 10px;
  background: ${(p) => (p.$on ? '#ff8400' : 'transparent')};
`

const LayerMark = styled.svg`
  width: 16px;
  height: 14px;
  margin: 0 ${(p) => p.$gap}px 0 9px;
`

const LayerCells = styled.div`
  display: flex;
  align-items: center;
  padding-left: 3px;
`

const ColourCell = styled.span`
  width: 12px;
  height: 12px;
  margin: 0 5px 0 3px;
  border: 1px solid ${(p) => (p.$show ? '#000' : 'transparent')};
`

const PencilSlot = styled.span`
  width: 14px;
  height: 14px;
`

const Stack = ({ red }) => (
  <svg width="12" height="13" viewBox="0 0 12 13">
    <ellipse cx="6" cy="2.500" rx="5" ry="2" fill={red ? '#d04840' : '#555'} />
    <path d="M1 5q5 4 10 0v1.500q-5 4-10 0zM1 8.500q5 4 10 0V10q-5 4-10 0z" fill={red ? '#e0706a' : '#777'} />
  </svg>
)

const ScrollPair = styled.div`
  display: flex;
`

const layers = [
  { name: 'ball_bounce', group: true, shown: true },
  { name: 'ball', on: true, shown: true },
  { name: 'arcs', shown: false },
  { name: 'ground', shown: true },
]

const Layer = ({ layer }) => (
  <LayerRow>
    <LayerName $on={layer.on}>
      <Check defaultChecked={layer.shown} />
      <LayerMark $gap={layer.group ? 1 : 20} viewBox="0 0 16 14">
        {layer.group ? <path d="M1 3h14L8 10z" fill="#eae8fa" stroke="#9a98b0" /> : <path d="M7 1v7h3M4 4h6" fill="none" stroke="#222" />}
      </LayerMark>
      <svg width="14" height="14" viewBox="0 0 14 14"><path d={layer.group ? 'M2 7h10' : 'M1 7h12M7 1v12'} stroke={layer.on ? '#fff' : '#333'} strokeWidth="2" /></svg>
      <svg width="13" height="14" viewBox="0 0 13 14">
        {layer.group
          ? <path d="M1 4h8v8H1zM1 4l3-3h8v8l-3 3M9 4l3-3M5 7v3M4 9h3" fill="#fff" stroke="#222" />
          : <><path d="M6 8h6V2H6z" fill="#2a86c0" /><path d="M0 10l4-7 4 7z" fill="#c02c38" /><circle cx="8.500" cy="10" r="3" fill="#f4dc50" stroke="#777" strokeWidth=".6" /></>}
      </svg>
      <Gap $w={3} />
      {layer.name}
    </LayerName>
    <LayerCells>
      <PencilSlot>{layer.on && <Fig name="pencil" size={13} />}</PencilSlot>
      <ColourCell $show={!layer.group} />
      <LockGlyph />
      <Gap $w={5} />
      <Stack red={layer.on} />
    </LayerCells>
  </LayerRow>
)

const FrameSide = styled.div`
  position: relative;
  flex: 1;
  min-width: 0;
  margin-left: 6px;
`

const RulerRow = styled.div`
  display: flex;
  height: 23px;
  border-bottom: 2px solid #505050;
`

const Ruler = styled.div`
  display: flex;
  flex: 1;
  min-width: 0;
  overflow: hidden;
  padding: 2px 0 0 36px;
  color: #77746e;
  background:
    repeating-linear-gradient(90deg, transparent 0 7px, #77746e 7px 8px) 0 100% / 100% 4px no-repeat,
    linear-gradient(#fff, #fff) 0 14px / 239px 3px no-repeat,
    linear-gradient(90deg, ${face} 239px, #b8b5aa 239px);
`

const RulerMark = styled.span`
  flex: none;
  width: 80px;
  text-align: center;
  font-size: 10px;
`

const RulerKey = styled.button`
  ${raised}
  flex: none;
  width: 18px;
`

const Track = styled.div`
  position: relative;
  height: 19px;
  border-bottom: 1px solid ${face};
  background: ${(p) => (p.$alt ? '#f4f3fd' : '#fff')};
`

const Exposure = styled.div`
  width: 239px;
  height: 18px;
  ${(p) => (p.$held ? css`
    background:
      repeating-linear-gradient(90deg, transparent 0 7px, #888 7px 8px) 0 100% / 100% 2px no-repeat,
      #dcdbdc;
    border-right: 1px solid #b05058;
    box-shadow: 0 1px 0 #a83840;
  ` : css`
    background:
      repeating-linear-gradient(90deg, transparent 0 71px, ${face} 71px 80px),
      repeating-linear-gradient(90deg, transparent 0 7px, ${face} 7px 8px);
  `)}
`

const CurrentCell = styled.span`
  position: absolute;
  top: 0;
  left: 1px;
  width: 15px;
  height: 18px;
  background: linear-gradient(90deg, #ff9c90 6px, #ff8400 6px);
`

const PlayHead = styled.svg`
  position: absolute;
  top: 0;
  left: 0;
  pointer-events: none;
`

const FrameFoot = styled.div`
  display: flex;
  align-items: center;
  height: 16px;
`

const ZoomBox = styled.div`
  width: 50px;
  margin: 0 6px 0 9px;
`

const marks = [10, 20, 30, 40, 50, 60, 70, 80, 90, 100, 110]

const TimelineView = () => (
  <Panel $red>
    <PanelHead menu line tabs={[['Timeline', 59], ['Module Library', 93]]} />
    <ToolRow>
      <Grip />
      <Tools list={['addDrawing', 'dupDrawing:dim', 'kfAdd', 'kfDel', 'motion', 'stop', 'kfPrev:dim', 'kfNext:dim', 'morphAdd', 'starDoc', 'search:dark', 'check', 'curves', 'scanner']} />
    </ToolRow>
    <TimeBody>
      <LayerSide>
        <LayerHead>
          <Tools list={['eyes', 'eyesCheck']} w={26} h={22} size={16} />
          <Gap $w={3} />
          <Tool icon="plus" more w={21} h={18} size={16} />
          <Tool icon="minus" w={20} h={22} size={16} />
          <Gap $w={1} />
          <Tools list={['layersAdd', 'pegAdd']} w={26} h={22} size={16} />
          <Gap $w={23} />
          <Tool icon="eye" kind="flat" more w={22} h={18} size={16} />
          <Gap $w={6} />
          <Tool icon="cellDot" kind="dark" w={19} h={22} size={16} />
          <Tools list={['dot', 'cell']} w={19} h={22} size={16} />
          <Gap $w={5} />
          <Tool icon="fold" w={22} h={22} size={16} />
        </LayerHead>
        <LayerScroller>
          <div>{layers.map((layer) => <Layer key={layer.name} layer={layer} />)}</div>
          <Scroll thumb={25} after={19} />
        </LayerScroller>
        <ScrollPair>
          <Scroll side off len="180px" before={1} />
          <Scroll side off len="94px" before={1} />
        </ScrollPair>
      </LayerSide>
      <FrameSide>
        <RulerRow>
          <Ruler>{marks.map((n) => <RulerMark key={n}>{n}</RulerMark>)}</Ruler>
          <RulerKey type="button" aria-label="Resize">
            <svg width="16" height="18" viewBox="0 0 16 18"><circle cx="8" cy="9" r="7.500" fill="#fff" /><path d="M8 2v14" stroke="#000" strokeWidth="1.500" /><path d="M1 9l5-4v3h4V5l5 4-5 4v-3H6v3z" /></svg>
          </RulerKey>
        </RulerRow>
        <Track><Exposure /></Track>
        <Track $alt><Exposure /><CurrentCell /></Track>
        <Track><Exposure $held /></Track>
        <Track $alt><Exposure $held /></Track>
        <FrameFoot>
          <Gap $w={4} />
          <svg width="14" height="14" viewBox="0 0 14 14"><circle cx="5" cy="5" r="3.500" fill="#eee" stroke="#555" /><path d="M8 8l5 5" stroke="#222" strokeWidth="2" /></svg>
          <ZoomBox><Slider aria-label="Timeline zoom" $tw={5} $th={12} $line="#606060" defaultValue={6} /></ZoomBox>
          <Scroll side grow len="auto" thumb={807} after={15} />
        </FrameFoot>
        <PlayHead width="250" height="99" viewBox="0 0 250 99">
          <path d="M0 21l1-5h6l-3 5z" fill="#000" />
          <path d="M1 1h6v14l-3 6-3-6z" fill="#f00000" /><path d="M3 18h1v81H3z" fill="#d02020" />
          <path d="M8 1h16v5q-5 0-8-3H8z" fill="#0000d8" />
          <path d="M236 1h6v21h-3V6h-3z" fill="#e01010" /><path d="M240 15l6 6h-6z" fill="#000" />
        </PlayHead>
      </FrameSide>
    </TimeBody>
  </Panel>
)

/* ---------- camera view ---------- */

const CameraView = () => (
  <Panel $flex="1">
    <PanelHead menu line tabs={[['Camera', 60], ['Drawing', 62], ['Perspective', 79]]}>
      <Crumb href="#top">
        <svg width="18" height="16" viewBox="0 0 18 16"><path d="M3 8h12v7H3z" fill="#c08444" stroke="#6c3c14" /><path d="M1 9l8-7 8 7" fill="none" stroke="#6c3c14" strokeWidth="2" /><path d="M8 10h4v5H8z" fill="#5c3010" /></svg>
        Top
      </Crumb>
    </PanelHead>
    <ToolRow>
      <Grip />
      <Tools list={['grid', 'fieldGrid', 'flatten', 'strip:dim', 'lock', 'unlock', 'stitch', 'stitchDim', 'zig:dim']} />
    </ToolRow>
    <Canvas>
      <Paper>
        <svg viewBox="154 134 662 371" preserveAspectRatio="xMidYMid meet">
          <g fill="none" stroke="#4843a8" strokeWidth="1.200">
            <path d="M209 265c0-15 12-27 27-26 16 1 26 9 25 22s-9 30-24 30c-17 0-28-9-28-26z" />
            <path d="M211 270c-3-17 10-29 23-29 18 0 27 8 26 24-1 15-12 27-26 26-11-1-22-9-23-21z" />
            <path d="M217 284c9 5 20 5 29 4M224 241c15-3 28 4 33 13" />
          </g>
          <path d="M279 456h456l5 1.500-5 1.500H594l-2-1H279z" fill="#4843a8" />
        </svg>
      </Paper>
    </Canvas>
    <Status>
      <Tool icon="crosshair" kind="none" up more w={25} h={25} size={20} />
      <Tool icon="gear" kind="none" on w={25} h={24} size={18} />
      <Tool icon="gearBlue" kind="none" more w={25} h={22} size={18} />
      <Gap $w={6} />
      <Tool icon="cameraRed" kind="none" more w={25} h={22} size={18} />
      <StatusText $w="60px" $align="right">35 %</StatusText>
      <Tool icon="none" kind="none" more w={10} h={20} size={6} />
      <Tool icon="zero" kind="none" w={26} h={24} size={18} />
      <Tool icon="swirl" on w={25} h={24} size={18} />
      <Tools list={['cyan:none', 'U:none']} w={25} h={24} size={20} />
      <Tool icon="diamond" kind="none" on more w={25} h={24} size={18} />
      <StatusText $flex="194">ball-1</StatusText>
      <StatusText $flex="194">Brush</StatusText>
      <StatusText $flex="185">Fr 1</StatusText>
      <StatusSwatch />
    </Status>
  </Panel>
)

/* ---------- page ---------- */

const Subtitle = styled.p`
  position: fixed;
  right: 0;
  bottom: 20px;
  left: 0;
  margin: 0;
  color: #fff;
  font: 400 34px/44px "Noto Sans CJK SC", sans-serif;
  text-align: center;
  text-shadow: -1px -1px 0 #222, 1px -1px 0 #222, -1px 1px 0 #222, 1px 1px 0 #222, 2px 2px 1px #222, 0 2px 0 #222, 2px 0 0 #222;
  pointer-events: none;
`

const Pointer = styled.svg`
  position: fixed;
  bottom: 32px;
  left: 54px;
  pointer-events: none;
`

const menus = [['File', 29], ['Edit', 29], ['View', 34], ['Play', 33], ['Insert', 40], ['Scene', 41], ['Drawing', 51], ['Animation', 59], ['Windows', 55], ['Help', 40]]

const App = () => (
  <Window>
    <GlobalStyle />
    <MenuBar>{menus.map(([name, w]) => <MenuItem key={name} type="button" $w={w}>{name}</MenuItem>)}</MenuBar>

    <BarRow $h={31}>
      <Bar>
        <Grip />
        <Tools list={['fnArrow', 'fnBox', '|', 'abc:flat', 'camera:flat', 'noLight:flat', 'target:flat', 'bulb:flat', 'deform', 'nodesDown:flat', 'nodesUp:flat', 'noCamera:flat']} />
      </Bar>
      <Bar $grow>
        <Grip />
        <Tool icon="play" />
        <Tool icon="playStar" more />
        <Tools list={['loop', 'sound', 'soundS']} />
        <JogBox>
          <Slider aria-label="Jog" $tw={22} $th={7} $line="#b0aea8" />
          <JogWheel />
        </JogBox>
        <NumberField label="Frame" value="1" />
        <NumberField label="Start" value="1" />
        <NumberField label="Stop" value="30" />
        <NumberField label="FPS" value="24" />
      </Bar>
      <Bar>
        <Grip />
        <Tools list={['page', 'folder', 'disk', 'diskPlus', 'importImg']} />
      </Bar>
      <Bar>
        <Grip />
        <Gap $w={37} />
        <More type="button" aria-label="More file tools">»</More>
      </Bar>
      <Bar>
        <Grip />
        <Tool icon="undo" />
        <ArrowButton type="button" aria-label="Undo list"><Tri size={9} /></ArrowButton>
        <More type="button" aria-label="More edit tools">»</More>
      </Bar>
    </BarRow>

    <BarRow $h={30}>
      <Bar>
        <Grip />
        <Tools list={['move', 'rotate', 'scale', 'skew', 'cube', 'spline']} />
      </Bar>
      <Bar>
        <Grip />
        <Gap $w={5} />
        <Picker label="Display" options={['Display']} w={77} />
      </Bar>
      <Bar>
        <Grip />
        <Tools list={['tools', 'hammer', 'wires', 'mask']} />
        <Tool icon="wirePair" on />
        <Tools list={['wireCut', '|', 'hingeA', 'hingeB', 'hingeC:dim', 'wireDim:dim', 'envelope:dim']} />
      </Bar>
      <Bar>
        <Grip />
        <Tools list={['bulb:flat', 'keyK', 'keyB', 'keyI', 'keyKR', 'keyBR', 'keyIR']} />
      </Bar>
      <Bar $grow>
        <Grip />
        <Tools list={['prev', 'next']} />
        <TickSlider>
          <TickMarks />
          <Slider aria-label="Playback speed" $tw={11} $th={16} $line="#606060" />
          <TickMarks />
        </TickSlider>
        <LoopLabel><Check defaultChecked />loop</LoopLabel>
      </Bar>
    </BarRow>

    <Workspace>
      <ToolBox>
        <ToolGrip />
        <Tool icon="arrow" more w={30} h={30} />
        <Tool icon="contour" more w={30} h={30} />
        <Tool icon="brush" on w={30} h={30} />
        <Tools list={['pencil', 'text', 'eraser']} w={30} h={30} />
        <Tool icon="bucket" more w={30} h={30} />
        <Tool icon="line" more w={30} h={30} />
        <Tools list={['dropper', 'morph']} w={30} h={30} />
        <Tool icon="hand" more w={30} h={30} />
        <ToolGrip $h={4} />
        <Tool icon="runner" kind="gold" on w={30} h={30} />
        <Tools list={['bounds', 'pivot', 'kite']} w={30} h={30} />
        <Tool icon="eyeOnion" on w={30} h={30} />
      </ToolBox>
      <Stage>
        <Upper>
          <CameraView />
          <Splitter tall />
          <SideColumn>
            <ColourView />
            <Splitter h={6} />
            <PropertiesView />
          </SideColumn>
        </Upper>
        <Splitter h={7} />
        <TimelineView />
      </Stage>
    </Workspace>

    <Pointer width="13" height="22" viewBox="0 0 13 22"><path d="M1 1v17l4-4 3 7 3-1-3-7h5z" fill="#fff" stroke="#000" /></Pointer>
    <Subtitle>一层是地面 还有一层是弧线</Subtitle>
  </Window>
)

export default App
